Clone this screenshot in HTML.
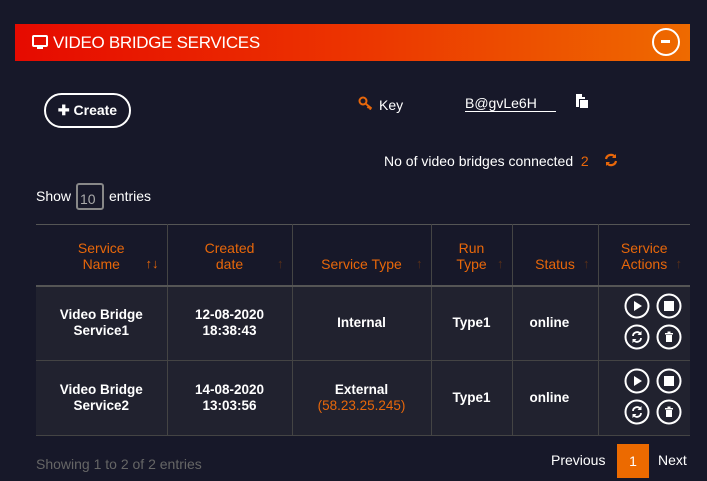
<!DOCTYPE html>
<html><head><style>
*{margin:0;padding:0;box-sizing:border-box}
body{width:707px;height:481px;background:#171829;font-family:"Liberation Sans",sans-serif;color:#fff;position:relative;overflow:hidden;font-size:14px}
.a{position:absolute}
.hdr{left:15px;top:24px;width:675px;height:37px;background:linear-gradient(90deg,#e60a00 0%,#ec3400 50%,#ee6a00 100%)}
.o{color:#e8670a}
table{position:absolute;left:36px;top:224px;width:654px;border-collapse:collapse;font-size:14px}
th{height:61px;color:#e8670a;font-weight:normal;border-right:1px solid #444;border-top:1px solid #555;border-bottom:2px solid #555;position:relative;text-align:center;line-height:16px;background:#171829;vertical-align:bottom;padding-bottom:13px}
td{background:#21222f;border-right:1px solid #444;border-bottom:1px solid #444;text-align:center;height:75px;line-height:16px;font-weight:bold;font-size:13.5px}
th:last-child,td:last-child{border-right:none}
.ar{position:absolute;right:8px;bottom:13px;color:#5a3018;font-size:13px}
.ic{display:inline-block;width:26px;height:26px;border:2px solid #fff;border-radius:50%;margin:2px 1px;vertical-align:middle;position:relative}
</style></head><body>
<div class="a hdr">
<svg class="a" style="left:17px;top:11px" width="16" height="15" viewBox="0 0 16 15"><rect x="1" y="1" width="14" height="10" rx="1" fill="none" stroke="#fff" stroke-width="2"/><rect x="5" y="12" width="6" height="2" fill="#fff"/></svg>
<div class="a" style="left:38px;top:9px;font-size:17px;letter-spacing:-0.3px">VIDEO BRIDGE SERVICES</div>
<div class="a" style="left:637px;top:4px;width:28px;height:28px;border:2.5px solid #fff;border-radius:50%"><div class="a" style="left:7px;top:10px;width:9px;height:3px;background:#fff"></div></div>
</div>
<div class="a" style="left:44px;top:93px;width:87px;height:35px;border:2px solid #fff;border-radius:18px;font-weight:bold;font-size:14px;line-height:31px;text-align:center">✚ Create</div>
<svg class="a" style="left:358px;top:96px" width="16" height="14" viewBox="0 0 16 14"><circle cx="5" cy="5" r="3.5" fill="none" stroke="#e8670a" stroke-width="2"/><path d="M7.5 7.5l6 5M11 10.5l-1.5 1.5M13 12l-1.5 1.5" stroke="#e8670a" stroke-width="2"/></svg>
<div class="a" style="left:379px;top:97px">Key</div>
<div class="a" style="left:465px;top:95px;width:91px;border-bottom:1px solid #fff;line-height:16px">B@gvLe6H</div>
<svg class="a" style="left:575px;top:93px" width="14" height="15" viewBox="0 0 14 15"><path d="M1 1h6v3h3v2H4v8H1z" fill="#fff"/><path d="M5 7h8v8H5z" fill="#fff"/></svg>
<div class="a" style="left:384px;top:153px">No of video bridges connected <span class="o">&nbsp;2</span></div>
<svg class="a" style="left:604px;top:153px" width="14" height="14" viewBox="0 0 14 14"><path d="M2 6a5 5 0 0 1 9-2M12 8a5 5 0 0 1-9 2" fill="none" stroke="#e8670a" stroke-width="2.2"/><path d="M12 1v4H8zM2 13V9h4z" fill="#e8670a"/></svg>
<div class="a" style="left:36px;top:188px">Show</div>
<div class="a" style="left:76px;top:183px;width:28px;height:27px;border:2px solid #888;border-radius:3px;color:#aaa;font-size:14px;padding:6px 0 0 2px">10</div>
<div class="a" style="left:109px;top:188px">entries</div>
<table>
<tr><th style="width:131px">Service<br>Name<span class="ar" style="color:#e8670a">↑↓</span></th><th style="width:125px">Created<br>date<span class="ar">↑</span></th><th style="width:139px">Service Type<span class="ar">↑</span></th><th style="width:81px">Run<br>Type<span class="ar">↑</span></th><th style="width:86px">Status<span class="ar">↑</span></th><th>Service<br>Actions<span class="ar">↑</span></th></tr>
<tr><td>Video Bridge<br>Service1</td><td>12-08-2020<br>18:38:43</td><td>Internal</td><td>Type1</td><td style="text-align:left;padding-left:17px">online</td><td></td></tr>
<tr><td>Video Bridge<br>Service2</td><td>14-08-2020<br>13:03:56</td><td>External<br><span class="o" style="font-weight:normal">(58.23.25.245)</span></td><td>Type1</td><td style="text-align:left;padding-left:17px">online</td><td></td></tr>
</table>
<svg class="a" style="left:624px;top:293px" width="62" height="140" viewBox="0 0 62 140">
<defs><g id="b">
<circle cx="13" cy="13" r="11.5" fill="none" stroke="#fff" stroke-width="2"/><path d="M10 8v10l8-5z" fill="#fff"/>
<circle cx="45" cy="13" r="11.5" fill="none" stroke="#fff" stroke-width="2"/><rect x="40" y="8" width="10" height="10" fill="#fff"/>
<circle cx="13" cy="44" r="11.5" fill="none" stroke="#fff" stroke-width="2"/><path d="M9 43a4 4 0 0 1 7-2.5M17 45a4 4 0 0 1-7 2.5" fill="none" stroke="#fff" stroke-width="1.8"/><path d="M17.5 38v4h-4zM8.5 50v-4h4z" fill="#fff"/>
<circle cx="45" cy="44" r="11.5" fill="none" stroke="#fff" stroke-width="2"/><path d="M41 40h8v1.5h-8zM43.5 38.5h3v1.5h-3zM42 42h6v7h-6z" fill="#fff"/>
</g></defs>
<use href="#b"/><use href="#b" y="75"/>
</svg>
<div class="a" style="left:36px;top:456px;color:#666">Showing 1 to 2 of 2 entries</div>
<div class="a" style="left:551px;top:452px">Previous</div>
<div class="a" style="left:617px;top:444px;width:32px;height:34px;background:#ec6a00;text-align:center;line-height:34px">1</div>
<div class="a" style="left:658px;top:452px">Next</div>
</body></html>
